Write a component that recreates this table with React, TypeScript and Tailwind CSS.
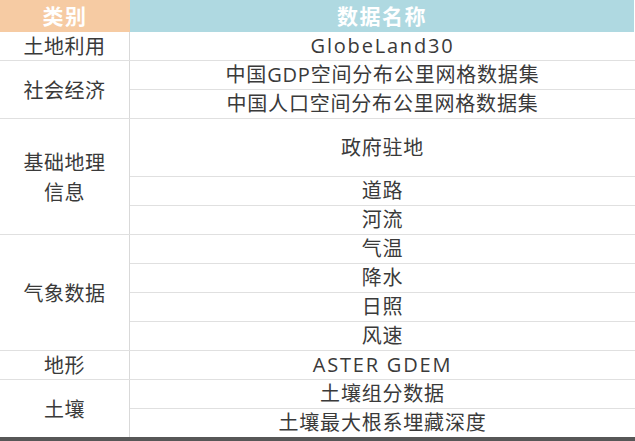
import React from "react";

type Item = { name: string; span?: number; latin?: boolean };

type Group = {
  category: string[];
  items: Item[];
};

const groups: Group[] = [
  { category: ["土地利用"], items: [{ name: "GlobeLand30", latin: true }] },
  {
    category: ["社会经济"],
    items: [{ name: "中国GDP空间分布公里网格数据集" }, { name: "中国人口空间分布公里网格数据集" }],
  },
  {
    category: ["基础地理", "信息"],
    items: [{ name: "政府驻地", span: 2 }, { name: "道路" }, { name: "河流" }],
  },
  {
    category: ["气象数据"],
    items: [{ name: "气温" }, { name: "降水" }, { name: "日照" }, { name: "风速" }],
  },
  { category: ["地形"], items: [{ name: "ASTER GDEM", latin: true }] },
  { category: ["土壤"], items: [{ name: "土壤组分数据" }, { name: "土壤最大根系埋藏深度" }] },
];

export default function App() {
  return (
    <div
      className="w-[635px] h-[441px] bg-white text-[#3a3a3a] overflow-hidden"
      style={{ fontFamily: '"Open Sans", "Noto Sans CJK SC", sans-serif' }}
    >
      <div className="flex flex-col border-b-4 border-[#575757]">
        <div className="flex h-[32px] text-white font-bold text-[21px] leading-[32px] tracking-[1.5px]">
          <div className="w-[130px] bg-[#f6cba3] flex items-center justify-center">类别</div>
          <div className="w-[504px] bg-[#afd9e1] flex items-center justify-center">数据名称</div>
        </div>

        {groups.map((g, gi) => {
          const lastGroup = gi === groups.length - 1;
          const units = g.items.reduce((n, it) => n + (it.span ?? 1), 0);
          return (
            <div
              key={gi}
              className={`flex overflow-hidden ${lastGroup ? "" : "border-b border-[#e0e0e0]"}`}
              style={{ height: units * 29 - (lastGroup ? 1 : 0) }}
            >
              <div className="w-[130px] shrink-0 border-r border-[#d9d9d9] flex flex-col items-center justify-center text-[20px] tracking-[0.5px] pt-[2px]">
                {g.category.map((line) => (
                  <span key={line} className="leading-[30px]">
                    {line}
                  </span>
                ))}
              </div>
              <div className="flex-1 flex flex-col">
                {g.items.map((it, ii) => {
                  const last = ii === g.items.length - 1;
                  return (
                    <div
                      key={it.name}
                      className={`flex items-center justify-center text-[20px] leading-[28px] ${
                        it.latin ? "tracking-[1.8px]" : "tracking-[0.8px]"
                      } ${last ? "flex-1" : "border-b border-[#e0e0e0]"}`}
                      style={last ? undefined : { height: (it.span ?? 1) * 29 }}
                    >
                      {it.name}
                    </div>
                  );
                })}
              </div>
            </div>
          );
        })}
      </div>
    </div>
  );
}
